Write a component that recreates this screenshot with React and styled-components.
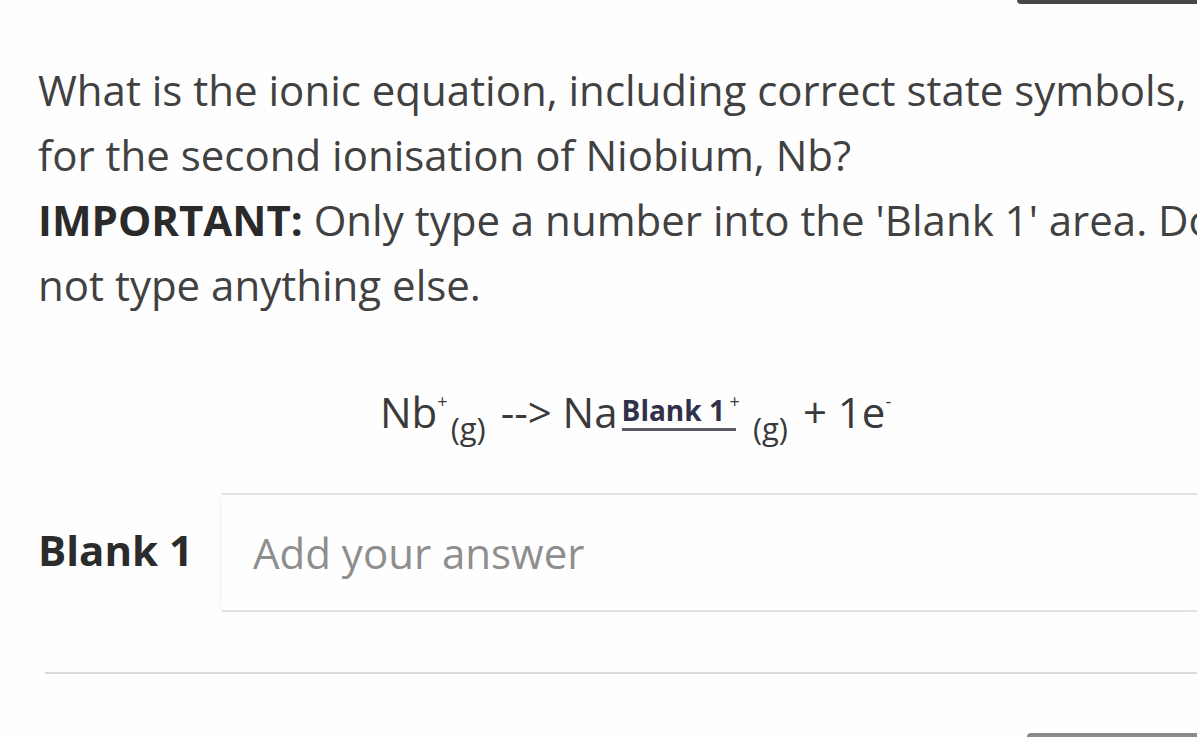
import React from "react";
import styled, { createGlobalStyle } from "styled-components";

const GlobalStyle = createGlobalStyle`
  html, body {
    margin: 0;
    padding: 0;
    background: #fefefe;
  }
  body {
    font-family: "Open Sans", "DejaVu Sans", sans-serif;
    color: #414141;
    overflow: hidden;
  }
`;

const Page = styled.div`
  width: 1197px;
  height: 737px;
  overflow: hidden;
  display: flex;
  flex-direction: column;
`;

const EdgeRow = styled.div`
  display: flex;
  justify-content: flex-end;
  flex: none;
  height: ${(p) => p.height}px;
`;

const ButtonEdge = styled.div`
  width: ${(p) => p.width}px;
  height: 4px;
  background: ${(p) => p.color};
  border-radius: ${(p) => (p.bottom ? "4px 0 0 0" : "0 0 0 4px")};
`;

const Question = styled.div`
  flex: none;
  width: 1215px;
  padding: 53px 0 0 38px;
  font-size: 42px;
  line-height: 65px;
`;

const Para = styled.p`
  margin: 0;
`;

const Strong = styled.b`
  font-weight: 700;
  color: #2a2a2a;
`;

const Equation = styled.div`
  flex: none;
  height: 60px;
  margin-top: 65px;
  padding-left: 380px;
  font-size: 42px;
  line-height: 60px;
  color: #3a3a3a;
  white-space: nowrap;
`;

const Sup = styled.sup`
  font-size: 18px;
  vertical-align: 20px;
  line-height: 0;
  margin-left: ${(p) => p.shift || 0}px;
  margin-right: ${(p) => p.gap || 0}px;
`;

const Sub = styled.sub`
  font-size: 31px;
  vertical-align: -12px;
  line-height: 0;
  margin-left: 3px;
  margin-right: 4px;
`;

const BlankSlot = styled.span`
  display: inline-block;
  width: 114px;
  border-bottom: 3px solid #5a5a66;
  font-size: 28px;
  font-weight: 700;
  color: #30304a;
  line-height: 36px;
  vertical-align: 7px;
  margin-left: 4px;
  white-space: nowrap;
`;

const AnswerRow = styled.div`
  flex: none;
  display: flex;
  align-items: center;
  margin-top: 51px;
  padding-left: 38px;
`;

const BlankLabel = styled.div`
  width: 184px;
  font-size: 42px;
  font-weight: 700;
  color: #2b2b2b;
  margin-top: -6px;
`;

const AnswerBox = styled.div`
  flex: 1;
  height: 115px;
  display: flex;
  align-items: center;
  padding-left: 31px;
  border-top: 2px solid #e2e2e4;
  border-bottom: 2px solid #e2e2e4;
  box-shadow: -6px 0 8px -6px rgba(0, 0, 0, 0.08);
  font-size: 42px;
  color: #8e8e8e;
`;

const Divider = styled.div`
  flex: none;
  margin: 60px 0 0 45px;
  height: 2px;
  background: #dadadc;
`;

const Spacer = styled.div`
  flex: 1;
`;

export default function App() {
  return (
    <>
      <GlobalStyle />
      <Page>
        <EdgeRow height={4}>
          <ButtonEdge width={180} color="#474747" />
        </EdgeRow>
        <Question>
          <Para>
            What is the ionic equation, including correct state symbols, for the second
            ionisation of Niobium, Nb?
          </Para>
          <Para>
            <Strong>IMPORTANT:</Strong> Only type a number into the 'Blank 1' area. Do not
            type anything else.
          </Para>
        </Question>
        <Equation>
          Nb<Sup>+</Sup>
          <Sub>(g)</Sub> --&gt; Na<BlankSlot>Blank 1</BlankSlot>
          <Sup shift={-6} gap={10}>+</Sup>
          <Sub>(g)</Sub> + 1e<Sup>-</Sup>
        </Equation>
        <AnswerRow>
          <BlankLabel>Blank 1</BlankLabel>
          <AnswerBox>Add your answer</AnswerBox>
        </AnswerRow>
        <Divider />
        <Spacer />
        <EdgeRow height={4}>
          <ButtonEdge width={170} color="#8a8a8a" bottom />
        </EdgeRow>
      </Page>
    </>
  );
}
